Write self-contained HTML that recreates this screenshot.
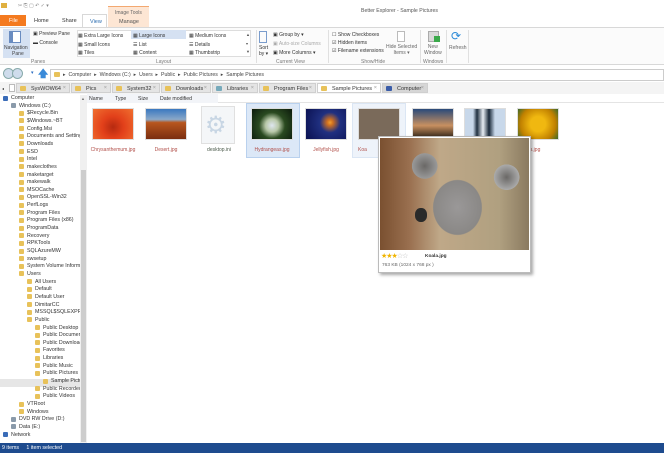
<!DOCTYPE html>
<html><head><meta charset="utf-8"><style>
*{margin:0;padding:0;box-sizing:border-box}
body{width:664px;height:453px;overflow:hidden;background:#fff;font-family:"Liberation Sans",sans-serif;font-size:5.5px;color:#333;position:relative}
.a{position:absolute;white-space:nowrap}
.f{position:absolute;width:6px;height:5px;background:#e8c25a;border-radius:1px}
.tab{position:absolute;top:83px;height:10px;background:#e4e4e4;border:1px solid #cfcfcf;font-size:5.5px;padding:2px 0 0 14px}
.tab .f{left:3px;top:2px}
.tab .x{position:absolute;right:3px;top:1px;color:#999}
.th{position:absolute;top:108px;width:42px;height:32px;border:1px solid #ddd}
.lb{position:absolute;top:147px;width:54px;text-align:center;color:#b2504a;font-size:5px}
.tr{position:absolute;left:0;font-size:5.3px;color:#333}
</style></head><body>
<!-- title -->
<div class="a" style="left:1px;top:3px;width:6px;height:5px;background:#e0b040"></div>
<div class="a" style="left:18px;top:3px;color:#888;font-size:5px">✂ ⎘ ▢ ↶ ✓ ▾</div>
<div class="a" style="left:361px;top:8px;font-size:5.2px;color:#555">Better Explorer - Sample Pictures</div>
<!-- ribbon tabs -->
<div class="a" style="left:0;top:15px;width:26px;height:11px;background:#f47a1f;color:#fff;font-size:5.5px;padding:3px 0 0 9px">File</div>
<div class="a" style="left:34px;top:18px;font-size:5.5px">Home</div>
<div class="a" style="left:62px;top:18px;font-size:5.5px">Share</div>
<div class="a" style="left:82px;top:14px;width:25px;height:14px;background:#fff;border:1px solid #d8d8d8;border-bottom:none;color:#2b6cb0;padding:4px 0 0 7px">View</div>
<div class="a" style="left:108px;top:6px;width:41px;height:21px;background:#fde6d4;border-top:1px solid #f3a870"></div>
<div class="a" style="left:115px;top:10px;color:#666;font-size:5px">Image Tools</div>
<div class="a" style="left:119px;top:19px;color:#555;font-size:5.5px">Manage</div>
<div class="a" style="left:0;top:27px;width:664px;height:38px;border-top:1px solid #d8d8d8;border-bottom:1px solid #d8d8d8;background:#fbfbfb"></div>
<!-- panes -->
<div class="a" style="left:3px;top:29px;width:27px;height:29px;background:#d5e1f2"></div>
<div class="a" style="left:9px;top:31px;width:12px;height:12px;border:1px solid #6a8cc0;background:#fff;border-left:4px solid #6a8cc0"></div>
<div class="a" style="left:4px;top:45px;font-size:5px;color:#444;text-align:center;line-height:6px">Navigation<br>&nbsp;&nbsp;&nbsp;Pane</div>
<div class="a" style="left:33px;top:31px;font-size:5px">▣ Preview Pane</div>
<div class="a" style="left:33px;top:40px;font-size:5px">▬ Console</div>
<div class="a" style="left:31px;top:59px;font-size:5px;color:#777">Panes</div>
<!-- layout -->
<div class="a" style="left:77px;top:30px;width:174px;height:27px;border:1px solid #ddd;background:#fff"></div>
<div class="a" style="left:131px;top:30px;width:55px;height:9px;background:#d5e1f2"></div>
<div class="a" style="left:78px;top:32px;font-size:5px;line-height:8.5px">▦ Extra Large Icons<br>▦ Small Icons<br>▦ Tiles</div>
<div class="a" style="left:133px;top:32px;font-size:5px;line-height:8.5px">▦ Large Icons<br>☰ List<br>▦ Content</div>
<div class="a" style="left:189px;top:32px;font-size:5px;line-height:8.5px">▦ Medium Icons<br>☰ Details<br>▦ Thumbstrip</div>
<div class="a" style="left:246px;top:31px;font-size:4px;color:#555;line-height:8.5px">▲<br>▾<br>▼</div>
<div class="a" style="left:156px;top:59px;font-size:5px;color:#777">Layout</div>
<div class="a" style="left:256px;top:30px;width:1px;height:33px;background:#e0e0e0"></div>
<div class="a" style="left:259px;top:31px;width:8px;height:12px;border:1px solid #7a9ccc"></div>
<div class="a" style="left:259px;top:45px;font-size:5px;line-height:6px">Sort<br>by ▾</div>
<div class="a" style="left:273px;top:31px;font-size:5px;line-height:9px">▣ Group by ▾<br><span style="color:#aaa">▣ Auto-size Columns</span><br>▣ More Columns ▾</div>
<div class="a" style="left:276px;top:59px;font-size:5px;color:#777">Current View</div>
<div class="a" style="left:328px;top:30px;width:1px;height:33px;background:#e0e0e0"></div>
<div class="a" style="left:332px;top:31px;font-size:5px;line-height:8.2px">☐ Show Checkboxes<br>☑ Hidden items<br>☑ Filename extensions</div>
<div class="a" style="left:397px;top:31px;width:8px;height:11px;border:1px solid #bbb;background:#fff"></div>
<div class="a" style="left:386px;top:44px;font-size:5px;color:#666;text-align:center;line-height:6px">Hide Selected<br>Items ▾</div>
<div class="a" style="left:361px;top:59px;font-size:5px;color:#777">Show/Hide</div>
<div class="a" style="left:420px;top:30px;width:1px;height:33px;background:#e0e0e0"></div>
<div class="a" style="left:428px;top:31px;width:11px;height:11px;background:#d9d9d9;border:1px solid #aaa"></div>
<div class="a" style="left:434px;top:36px;width:6px;height:6px;background:#3aa94a"></div>
<div class="a" style="left:424px;top:44px;font-size:5px;color:#666;text-align:center;line-height:6px">New<br>Window</div>
<div class="a" style="left:423px;top:59px;font-size:5px;color:#777">Windows</div>
<div class="a" style="left:446px;top:30px;width:1px;height:33px;background:#e0e0e0"></div>
<div class="a" style="left:451px;top:29px;font-size:12px;color:#2a8ad8">⟳</div>
<div class="a" style="left:449px;top:45px;font-size:5px;color:#666">Refresh</div>
<div class="a" style="left:468px;top:30px;width:1px;height:33px;background:#e0e0e0"></div>
<!-- address -->
<div class="a" style="left:3px;top:68px;width:11px;height:11px;border-radius:50%;background:#cfdcec;border:1px solid #8aa"></div>
<div class="a" style="left:12px;top:68px;width:11px;height:11px;border-radius:50%;background:#cfdcec;border:1px solid #8aa"></div>
<div class="a" style="left:31px;top:70px;font-size:5px;color:#2a6cc0">▾</div>
<div class="a" style="left:38px;top:67px;font-size:10px;color:#3a8ad8;font-weight:bold">🡅</div>
<div class="a" style="left:50px;top:69px;width:614px;height:12px;border:1px solid #ccc;background:#fff"></div>
<div class="f" style="left:54px;top:72px"></div>
<div class="a" style="left:63px;top:72px;font-size:5.2px;color:#444">▸ &nbsp;Computer &nbsp;▸ &nbsp;Windows (C:) &nbsp;▸ &nbsp;Users &nbsp;▸ &nbsp;Public &nbsp;▸ &nbsp;Public Pictures &nbsp;▸ &nbsp;Sample Pictures</div>
<!-- tabs -->
<div class="a" style="left:0;top:82px;width:664px;height:12px;background:#f4f4f4"></div>
<div class="a" style="left:2px;top:86px;font-size:4px">◂</div>
<div class="a" style="left:9px;top:84px;width:6px;height:8px;border:1px solid #bbb;background:#fff"></div>
<div class="tab" style="left:16px;width:54px"><div class="f"></div>SysWOW64<span class="x">×</span></div>
<div class="tab" style="left:71px;width:40px"><div class="f"></div>Pics<span class="x">×</span></div>
<div class="tab" style="left:112px;width:48px"><div class="f"></div>System32<span class="x">×</span></div>
<div class="tab" style="left:161px;width:50px"><div class="f"></div>Downloads<span class="x">×</span></div>
<div class="tab" style="left:212px;width:46px"><div class="f" style="background:#7ab"></div>Libraries<span class="x">×</span></div>
<div class="tab" style="left:259px;width:57px"><div class="f"></div>Program Files<span class="x">×</span></div>
<div class="tab" style="left:317px;width:64px;background:#fff"><div class="f"></div>Sample Pictures<span class="x">×</span></div>
<div class="tab" style="left:382px;width:46px;background:#d6d6d6"><div class="f" style="background:#3a5ca8"></div>Computer<span class="x">×</span></div>
<!-- column headers -->
<div class="a" style="left:87px;top:94px;width:577px;height:9px;border-bottom:1px solid #e4e4e4"></div>
<div class="a" style="left:87px;top:94px;width:131px;height:9px;background:#f2f4f8"></div>
<div class="a" style="left:89px;top:96px;font-size:5.2px">Name</div>
<div class="a" style="left:115px;top:96px;font-size:5.2px">Type</div>
<div class="a" style="left:138px;top:96px;font-size:5.2px">Size</div>
<div class="a" style="left:160px;top:96px;font-size:5.2px">Date modified</div>
<!-- tree -->
<div class="a" style="left:80px;top:95px;width:7px;height:348px;background:#f0f0f0"></div>
<div class="a" style="left:81px;top:170px;width:5px;height:272px;background:#cdcdcd"></div>
<div class="a" style="left:81px;top:96px;font-size:4px;color:#777">▲</div>
<div class="a" style="left:0;top:379px;width:80px;height:8px;background:#e6e6e6"></div>
<div id="tree"></div>
<!-- thumbnails -->
<div class="a" style="left:246px;top:103px;width:54px;height:55px;background:#dce8f7;border:1px solid #b9d1ee"></div>
<div class="a" style="left:352px;top:103px;width:54px;height:55px;background:#eef3fa;border:1px solid #dbe6f4"></div>
<div class="th" style="left:92px;background:radial-gradient(circle at 50% 60%,#b62a10,#e2401a 40%,#f07030)"></div>
<div class="th" style="left:145px;background:linear-gradient(#3a78c0 0%,#8aa8c8 35%,#b8561e 45%,#7a2e10)"></div>
<div class="a" style="left:201px;top:106px;width:34px;height:38px;background:#f4f6f8;border:1px solid #e0e0e0"></div>
<div class="a" style="left:205px;top:111px;font-size:24px;color:#c8d6e4">⚙</div>
<div class="th" style="left:251px;background:radial-gradient(circle at 50% 55%,#dfe6f0 0,#b8c8a8 25%,#2a4a20 50%,#0c1a0c)"></div>
<div class="th" style="left:305px;background:radial-gradient(circle at 60% 45%,#f0a030 0,#d07020 10%,#203080 35%,#0a1050)"></div>
<div class="th" style="left:358px;background:#7a6a5a"></div>
<div class="th" style="left:412px;background:linear-gradient(#2a4a7a,#c89060 55%,#201810)"></div>
<div class="th" style="left:464px;background:linear-gradient(90deg,#c8d8ea 20%,#203040 30%,#e8eef4 45%,#182838 60%,#c8d8ea 75%)"></div>
<div class="th" style="left:517px;background:radial-gradient(circle,#f0b810 30%,#c08000 70%,#3a6a2a)"></div>
<div class="lb" style="left:86px">Chrysanthemum.jpg</div>
<div class="lb" style="left:139px">Desert.jpg</div>
<div class="lb" style="left:192px;color:#4a5a4a">desktop.ini</div>
<div class="lb" style="left:245px">Hydrangeas.jpg</div>
<div class="lb" style="left:299px">Jellyfish.jpg</div>
<div class="lb" style="left:358px;width:20px;text-align:left">Koa</div>
<div class="lb" style="left:522px;width:30px;text-align:left">ulips.jpg</div>
<!-- popup -->
<div class="a" style="left:378px;top:136px;width:153px;height:137px;background:#fff;border:1px solid #bbb;box-shadow:2px 2px 3px rgba(0,0,0,.35)"></div>
<div class="a" style="left:380px;top:138px;width:149px;height:112px;background:radial-gradient(ellipse 40px 45px at 52% 62%,#9a9898 0,#8a8886 60%,transparent 62%),radial-gradient(circle 18px at 30% 25%,#6a6866 0,#999 70%,transparent 72%),radial-gradient(circle 18px at 85% 35%,#6a6866 0,#aaa 70%,transparent 72%),linear-gradient(90deg,#7a5030 0,#9a7050 20%,#bfa888 40%,#b0a080 80%,#8a7a60)"></div>
<div class="a" style="left:415px;top:208px;width:12px;height:14px;border-radius:45%;background:#2a2a2a"></div>
<div class="a" style="left:381px;top:252px;font-size:7px;color:#f0b400;letter-spacing:-1px">★★★<span style="color:#bbb">☆☆</span></div>
<div class="a" style="left:425px;top:254px;font-size:4.8px;font-weight:bold;color:#333">Koala.jpg</div>
<div class="a" style="left:382px;top:263px;font-size:4.8px;color:#666">763 KB (1024 x 768 px )</div>
<!-- status -->
<div class="a" style="left:0;top:443px;width:664px;height:10px;background:#1e4b8e"></div>
<div class="a" style="left:2px;top:445px;font-size:5.3px;color:#fff">9 items &nbsp;&nbsp;&nbsp;&nbsp;1 item selected</div>
<script>
var items=[[0,"Computer","c"],[1,"Windows (C:)","d"]];
["$Recycle.Bin","$Windows.~BT","Config.Msi","Documents and Settings","Downloads","ESD","Intel","makeclothes","maketarget","makewalk","MSOCache","OpenSSL-Win32","PerfLogs","Program Files","Program Files (x86)","ProgramData","Recovery","RPKTools","SQLAzureMW","swsetup","System Volume Information","Users"].forEach(function(n){items.push([2,n])});
["All Users","Default","Default User","DimitarCC","MSSQL$SQLEXPRESS","Public"].forEach(function(n){items.push([3,n])});
["Public Desktop","Public Documents","Public Downloads","Favorites","Libraries","Public Music","Public Pictures"].forEach(function(n){items.push([4,n])});
items.push([5,"Sample Pictures"]);
["Public Recorded TV","Public Videos"].forEach(function(n){items.push([4,n])});
items.push([2,"VTRoot"]);items.push([2,"Windows"]);
items.push([1,"DVD RW Drive (D:)","v"]);items.push([1,"Data (E:)","v"]);items.push([0,"Network","n"]);
var h="";items.forEach(function(it,i){var y=94+i*7.65;var x=3+it[0]*8;
var col=it[2]=="c"||it[2]=="n"?"#3a6cb8":it[2]=="d"||it[2]=="v"?"#8a9aaa":"#e8c25a";
h+='<div class="f" style="left:'+x+'px;top:'+(y+1.5)+'px;width:5px;background:'+col+'"></div><div class="tr" style="left:'+(x+8)+'px;top:'+y+'px;width:'+(80-x-8)+'px;overflow:hidden;white-space:nowrap;height:8px;line-height:8px">'+it[1]+'</div>';});
document.getElementById("tree").innerHTML=h;
</script>
</body></html>
